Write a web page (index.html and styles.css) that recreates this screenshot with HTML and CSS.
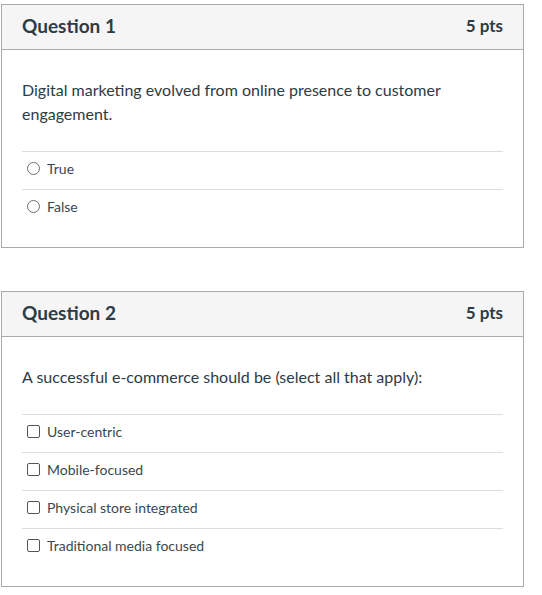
FILE: index.html
```html
<!DOCTYPE html>
<html lang="en">
<head>
<meta charset="utf-8">
<title>Quiz</title>
<link rel="stylesheet" href="styles.css">
</head>
<body>
<div class="quiz">
  <section class="question">
    <header class="q-header">
      <h2 class="q-title">Question 1</h2>
      <span class="q-points">5 pts</span>
    </header>
    <div class="q-body">
      <p class="q-text">Digital marketing evolved from online presence to customer engagement.</p>
      <ul class="answers">
        <li class="answer"><span class="radio"></span><span class="label">True</span></li>
        <li class="answer"><span class="radio"></span><span class="label">False</span></li>
      </ul>
    </div>
  </section>

  <section class="question">
    <header class="q-header">
      <h2 class="q-title">Question 2</h2>
      <span class="q-points">5 pts</span>
    </header>
    <div class="q-body">
      <p class="q-text">A successful e-commerce should be (select all that apply):</p>
      <ul class="answers">
        <li class="answer"><span class="checkbox"></span><span class="label">User-centric</span></li>
        <li class="answer"><span class="checkbox"></span><span class="label">Mobile-focused</span></li>
        <li class="answer"><span class="checkbox"></span><span class="label">Physical store integrated</span></li>
        <li class="answer"><span class="checkbox"></span><span class="label">Traditional media focused</span></li>
      </ul>
    </div>
  </section>
</div>
</body>
</html>
```

FILE: styles.css
```css
* { box-sizing: border-box; }
body {
  margin: 0;
  background: #ffffff;
  font-family: Lato, "Liberation Sans", sans-serif;
  color: #2d3b45;
}
.quiz {
  padding: 4px 18px 0 1px;
  display: flex;
  flex-direction: column;
  gap: 43px;
}
.question {
  border: 1px solid #aaaaaa;
  background: #fff;
}
.q-header {
  height: 45px;
  background: #f5f5f5;
  border-bottom: 1px solid #aaaaaa;
  display: flex;
  align-items: center;
  justify-content: space-between;
  padding: 0 20px 3px 20px;
}
.q-title {
  margin: 0;
  font-size: 19px;
  font-weight: 700;
}
.q-points {
  font-size: 17px;
  font-weight: 700;
}
.q-body {
  padding: 28px 20px 20px 20px;
}
.q-text {
  margin: 0 0 25px 0;
  font-size: 16px;
  line-height: 24px;
  padding-right: 40px;
}
.answers {
  list-style: none;
  margin: 0;
  padding: 0;
}
.answer {
  height: 38px;
  border-top: 1px solid #dddddd;
  display: flex;
  align-items: center;
  padding: 0 0 5px 5px;
  gap: 7px;
  font-size: 14px;
  color: #3a4750;
}
.radio {
  width: 13px;
  height: 13px;
  border: 1px solid #707070;
  border-radius: 50%;
  flex: none;
}
.checkbox {
  width: 13px;
  height: 13px;
  border: 1px solid #555555;
  border-radius: 2px;
  flex: none;
}
```
